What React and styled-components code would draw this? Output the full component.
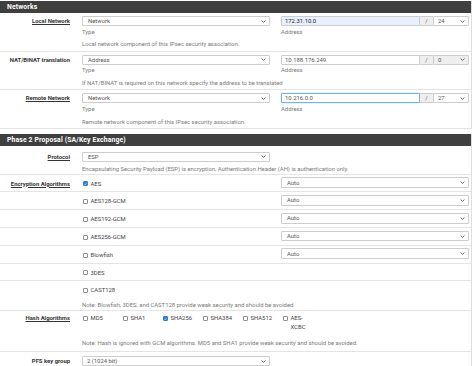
import React from "react";
import styled, { createGlobalStyle, css } from "styled-components";

const Global = createGlobalStyle`
  html, body { margin: 0; padding: 0; background: #fff; }
  body {
    font-family: Roboto, "Liberation Sans", Arial, sans-serif;
    font-size: 5.9px;
    color: #333;
  }
  * { box-sizing: border-box; }
`;

const Page = styled.div`
  width: 474px;
  padding-top: 1px;
`;

const Panel = styled.section`
  width: 472px;
  border-right: 1px solid #dedede;
  & + & { margin-top: 5px; }
`;

const Heading = styled.h2`
  margin: 0;
  height: 12px;
  background: #3f3f3f;
  color: #fff;
  font-size: 6.8px;
  font-weight: 700;
  line-height: 12px;
  padding-left: 7px;
  letter-spacing: 0.15px;
`;

const Row = styled.div`
  display: grid;
  grid-template-columns: 71px 188px 188px;
  column-gap: 11px;
  row-gap: ${(p) => p.$rowGap ?? 0}px;
  align-content: start;
  height: ${(p) => p.$h}px;
  padding-top: ${(p) => p.$pt}px;
  border-bottom: ${(p) => (p.$last ? "none" : "1px solid #e4e4e4")};
`;

const Label = styled.div`
  grid-row: 1;
  grid-column: 1;
  text-align: right;
  padding-right: 1px;
  font-weight: 700;
  color: #333;
  white-space: nowrap;
  line-height: 8.4px;
  padding-top: ${(p) => p.$pt ?? 1}px;
  ${(p) =>
    p.$req &&
    css`
      text-decoration: underline;
      text-underline-offset: 1px;
      text-decoration-thickness: 0.6px;
    `}
`;

const Col = styled.div`
  grid-column: ${(p) => p.$col};
  grid-row: 1;
  display: flex;
  flex-direction: column;
  min-width: 0;
`;

const Help = styled.div`
  color: #7a7a7a;
  line-height: 8.4px;
  margin-top: ${(p) => p.$mt ?? 0}px;
  white-space: nowrap;
  grid-column: ${(p) => p.$span ?? "auto"};
`;

const SelectBox = styled.div`
  height: 10px;
  width: ${(p) => (p.$w ? `${p.$w}px` : "auto")};
  flex: ${(p) => (p.$w ? "none" : "1")};
  border: 1px solid #cdcdcd;
  border-radius: 1px;
  background: ${(p) => (p.$disabled ? "#eeeeee" : "#fff")};
  display: flex;
  align-items: center;
  justify-content: space-between;
  padding: 0 3px 0 ${(p) => p.$pl ?? 5}px;
  color: #555;
  line-height: 8px;
  white-space: nowrap;
`;

const Chevron = styled.svg`
  width: 5px;
  height: 3px;
  flex: none;
`;

const Select = ({ children, ...rest }) => (
  <SelectBox {...rest}>
    <span>{children}</span>
    <Chevron viewBox="0 0 5 3">
      <polyline points="0.6,0.5 2.5,2.4 4.4,0.5" fill="none" stroke="#555" strokeWidth="0.9" />
    </Chevron>
  </SelectBox>
);

const InputGroup = styled.div`
  display: flex;
  height: 10px;
`;

const Input = styled.div`
  flex: 1;
  height: 10px;
  line-height: 8px;
  padding-left: 3px;
  border: 1px solid ${(p) => (p.$focus ? "#74b3e8" : "#cdcdcd")};
  background: ${(p) => (p.$autofill ? "#e8f0fe" : "#fff")};
  color: ${(p) => (p.$autofill ? "#222" : "#555")};
  border-radius: 1px 0 0 1px;
  ${(p) => p.$focus && css`box-shadow: 0 0 2px rgba(102, 175, 233, 0.55);`}
`;

const Addon = styled.div`
  width: 13px;
  height: 10px;
  line-height: 8px;
  text-align: center;
  color: #666;
  background: #eeeeee;
  border-top: 1px solid #cdcdcd;
  border-bottom: 1px solid #cdcdcd;
`;

const CheckItem = styled.div`
  display: flex;
  align-items: flex-start;
  gap: 2.5px;
  margin-top: ${(p) => p.$mt ?? 0}px;
  padding-left: 1px;
  line-height: 8.4px;
  color: #444;
  grid-column: ${(p) => p.$col ?? "auto"};
  grid-row: 1;
  white-space: nowrap;
`;

const Box = styled.span`
  flex: none;
  width: 5px;
  height: 5px;
  margin-top: 1.7px;
  border-radius: 1px;
  border: 0.8px solid ${(p) => (p.$on ? "#2f7fd6" : "#8d8d8d")};
  background: ${(p) => (p.$on ? "#2f7fd6" : "#fff")};
  display: flex;
  align-items: center;
  justify-content: center;
`;

const CheckText = styled.span`
  ${(p) =>
    p.$narrow &&
    css`
      max-width: 22px;
      white-space: normal;
    `}
`;

const Check = ({ on, narrow, children, ...rest }) => (
  <CheckItem {...rest}>
    <Box $on={on}>
      {on && (
        <svg width="4" height="4" viewBox="0 0 4 4">
          <polyline points="0.6,2 1.6,3 3.4,0.9" fill="none" stroke="#fff" strokeWidth="0.8" />
        </svg>
      )}
    </Box>
    <CheckText $narrow={narrow}>{children}</CheckText>
  </CheckItem>
);

const HashGrid = styled.div`
  grid-column: 2 / 4;
  grid-row: 1;
  display: grid;
  grid-template-columns: repeat(6, 40px);
  margin-top: 1.2px;
`;

const NetworkRow = ({ label, req, type, addr, autofill, focus, mask, maskDisabled, desc }) => (
  <Row $h={38.7} $pt={3} $rowGap={4.4}>
    <Label $req={req} $pt={1}>{label}</Label>
    <Col $col={2}>
      <Select>{type}</Select>
      <Help $mt={1.5}>Type</Help>
    </Col>
    <Col $col={3}>
      <InputGroup>
        <Input $autofill={autofill} $focus={focus}>{addr}</Input>
        <Addon>/</Addon>
        <Select $w={36} $pl={4} $disabled={maskDisabled}>{mask}</Select>
      </InputGroup>
      <Help $mt={1.5}>Address</Help>
    </Col>
    <Help $span="2 / 4">{desc}</Help>
  </Row>
);

const EncRow = ({ label, name, on, keylen, h = 17.8, note }) => (
  <Row $h={h} $pt={2.7} $rowGap={6.3}>
    {label && <Label $req $pt={2.4}>{label}</Label>}
    <Check $col={2} $mt={2.4} on={on}>{name}</Check>
    {keylen && (
      <Col $col={3}>
        <Select>{keylen}</Select>
      </Col>
    )}
    {note && <Help $span="2 / 4">{note}</Help>}
  </Row>
);

export default function App() {
  return (
    <Page>
      <Global />
      <Panel>
        <Heading>Networks</Heading>
        <NetworkRow
          label="Local Network"
          req
          type="Network"
          addr="172.31.10.0"
          autofill
          mask="24"
          desc="Local network component of this IPsec security association."
        />
        <NetworkRow
          label="NAT/BINAT translation"
          type="Address"
          addr="10.188.176.249"
          mask="0"
          maskDisabled
          desc="If NAT/BINAT is required on this network specify the address to be translated"
        />
        <NetworkRow
          label="Remote Network"
          req
          type="Network"
          addr="10.216.0.0"
          focus
          mask="27"
          desc="Remote network component of this IPsec security association."
        />
      </Panel>
      <Panel>
        <Heading>Phase 2 Proposal (SA/Key Exchange)</Heading>
        <Row $h={28.5} $pt={5.5} $rowGap={3}>
          <Label $req $pt={1}>Protocol</Label>
          <Col $col={2}>
            <Select>ESP</Select>
          </Col>
          <Help $span="2 / 4">
            Encapsulating Security Payload (ESP) is encryption, Authentication Header (AH) is authentication only.
          </Help>
        </Row>
        <EncRow label="Encryption Algorithms" name="AES" on keylen="Auto" />
        <EncRow name="AES128-GCM" keylen="Auto" />
        <EncRow name="AES192-GCM" keylen="Auto" />
        <EncRow name="AES256-GCM" keylen="Auto" />
        <EncRow name="Blowfish" keylen="Auto" />
        <EncRow name="3DES" />
        <EncRow
          name="CAST128"
          h={29.2}
          note="Note: Blowfish, 3DES, and CAST128 provide weak security and should be avoided."
        />
        <Row $h={41} $pt={2.7} $rowGap={7.9}>
          <Label $req $pt={1.2}>Hash Algorithms</Label>
          <HashGrid>
            <Check>MD5</Check>
            <Check>SHA1</Check>
            <Check on>SHA256</Check>
            <Check>SHA384</Check>
            <Check>SHA512</Check>
            <Check narrow>AES-XCBC</Check>
          </HashGrid>
          <Help $span="2 / 4">
            Note: Hash is ignored with GCM algorithms. MD5 and SHA1 provide weak security and should be avoided.
          </Help>
        </Row>
        <Row $h={20} $pt={4.5} $last>
          <Label $pt={1}>PFS key group</Label>
          <Col $col={2}>
            <Select $pl={4}>2 (1024 bit)</Select>
          </Col>
        </Row>
      </Panel>
    </Page>
  );
}
